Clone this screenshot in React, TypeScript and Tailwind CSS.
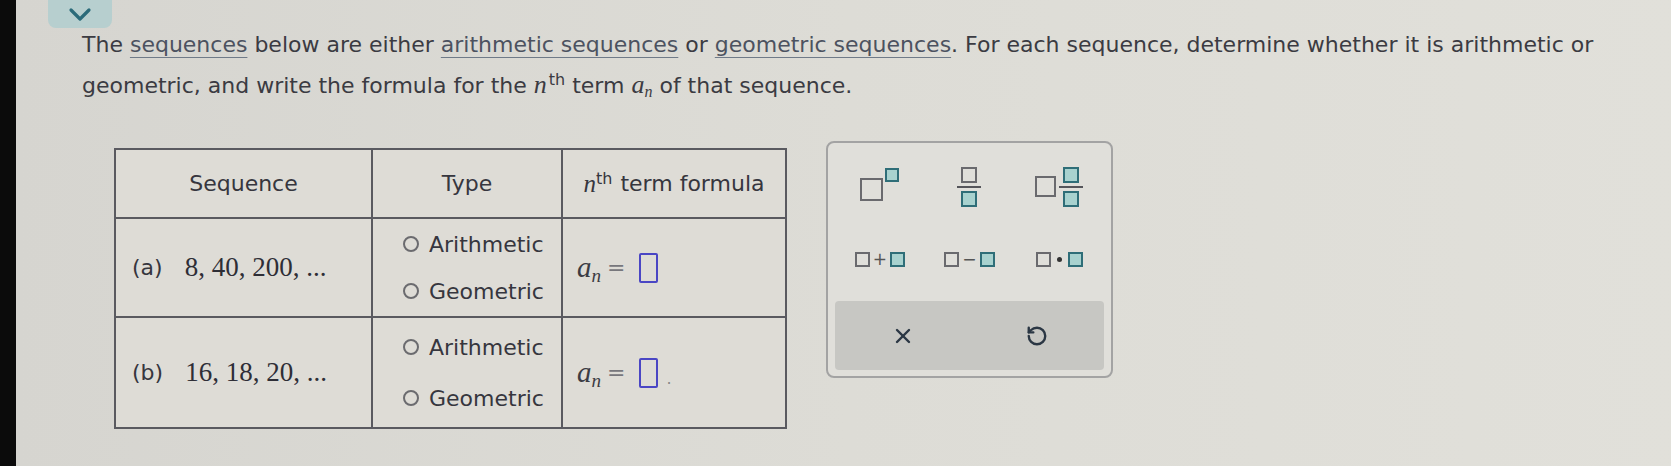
import { RotateCcw, X } from "lucide-react";

const sans = { fontFamily: '"DejaVu Sans", Verdana, sans-serif' };

function Sq({ teal = false, size = 12 }: { teal?: boolean; size?: number }) {
  return (
    <span
      className={`inline-block border-2 ${teal ? "border-[#2f6e78] bg-[#a8d2cf]" : "border-[#6a6a6e] bg-transparent"}`}
      style={{ width: size, height: size }}
    />
  );
}

function Radio({ label }: { label: string }) {
  return (
    <div className="flex items-center gap-[10px]">
      <span className="inline-block h-[16px] w-[16px] rounded-full border-2 border-[#6b6b6f]" />
      <span>{label}</span>
    </div>
  );
}

function AnBox({ dot = false }: { dot?: boolean }) {
  return (
    <div className="flex items-center pl-[14px]">
      <span className="font-['Liberation_Serif',serif] text-[29px] italic text-[#3c3c44]">
        a<sub className="text-[19px]">n</sub>
      </span>
      <span className="ml-[6px] text-[22px] text-[#77777c]">=</span>
      <span className="ml-[14px] inline-block h-[30px] w-[19px] rounded-[2px] border-2 border-[#4a46c4]" />
      {dot && <span className="ml-[8px] mt-[12px] text-[16px] text-[#888]">.</span>}
    </div>
  );
}

export default function App() {
  const row = (label: string, seq: string, h: string, gap: string, dot = false) => (
    <div className={`flex ${h} border-t-2 border-[#5a5a60]`}>
      <div className="flex w-[257px] items-center gap-[22px] border-r-2 border-[#5a5a60] pl-[16px]">
        <span>{label}</span>
        <span className="font-['Liberation_Serif',serif] text-[27px] text-[#2e2e36]">{seq}</span>
      </div>
      <div className={`flex w-[190px] flex-col justify-center ${gap} border-r-2 border-[#5a5a60] pl-[30px]`}>
        <Radio label="Arithmetic" />
        <Radio label="Geometric" />
      </div>
      <div className="flex w-[222px] items-center">
        <AnBox dot={dot} />
      </div>
    </div>
  );

  const link = "underline decoration-[#6f7a88] decoration-1 underline-offset-[5px] text-[#4c5260]";

  return (
    <div className="flex h-[466px] w-[1671px] overflow-hidden bg-black" style={sans}>
      <div className="w-[16px] shrink-0 bg-[#0b0b0b]" />
      <div className="flex flex-1 flex-col bg-gradient-to-r from-[#d6d5d0] via-[#dddcd6] to-[#e1e0da] text-[#3b3b42]">
        <div className="ml-[32px] flex h-[28px] w-[64px] items-center justify-center rounded-b-[8px] bg-[#b7cfcf]">
          <svg width="26" height="16" viewBox="0 0 26 16" fill="none">
            <path d="M4 4l9 9 9-9" stroke="#2b6b7a" strokeWidth="3.2" strokeLinecap="round" strokeLinejoin="round" />
          </svg>
        </div>

        <p className="ml-[66px] -mt-[3px] text-[22px] leading-[40px]">
          The <span className={link}>sequences</span> below are either{" "}
          <span className={link}>arithmetic sequences</span> or{" "}
          <span className={link}>geometric sequences</span>. For each sequence, determine whether it is arithmetic or
          <br />
          geometric, and write the formula for the{" "}
          <span className="font-['Liberation_Serif',serif] text-[26px] italic">n</span>
          <sup className="ml-[2px] text-[16px] leading-none">th</sup> term{" "}
          <span className="font-['Liberation_Serif',serif] text-[26px] italic">
            a<sub className="text-[16px] leading-none">n</sub>
          </span>{" "}
          of that sequence.
        </p>

        <div className="ml-[98px] mt-[35px] flex items-start gap-[39px]">
          <div className="mt-[7px] border-2 border-[#5a5a60] bg-[#dedcd6] text-[22px] text-[#36363e]">
            <div className="flex h-[67px] items-center">
              <div className="flex h-full w-[257px] items-center justify-center border-r-2 border-[#5a5a60]">Sequence</div>
              <div className="flex h-full w-[190px] items-center justify-center border-r-2 border-[#5a5a60]">Type</div>
              <div className="flex h-full w-[222px] items-center justify-center gap-[8px]">
                <span>
                  <span className="font-['Liberation_Serif',serif] text-[25px] italic">n</span>
                  <sup className="text-[16px]">th</sup>
                </span>
                <span>term formula</span>
              </div>
            </div>
            {row("(a)", "8, 40, 200, ...", "h-[99px]", "gap-[14px]")}
            {row("(b)", "16, 18, 20, ...", "h-[111px]", "gap-[18px]", true)}
          </div>

          <div className="flex h-[237px] w-[287px] flex-col rounded-[8px] border-2 border-[#a3a3a3] bg-[#e0dfda] px-[7px] pb-[6px] pt-[12px]">
            <div className="grid grid-cols-3 items-center justify-items-center pt-[10px]">
              <div className="flex items-start">
                <span className="mt-[13px]"><Sq size={23} /></span>
                <span className="ml-[2px]"><Sq teal size={14} /></span>
              </div>
              <div className="flex flex-col items-center">
                <Sq size={16} />
                <span className="my-[3px] h-[2px] w-[24px] bg-[#55555a]" />
                <Sq teal size={16} />
              </div>
              <div className="flex items-center">
                <Sq size={21} />
                <div className="ml-[3px] flex flex-col items-center">
                  <Sq teal size={16} />
                  <span className="my-[3px] h-[2px] w-[24px] bg-[#55555a]" />
                  <Sq teal size={16} />
                </div>
              </div>
            </div>
            <div className="mt-[39px] grid grid-cols-3 items-center justify-items-center">
              <div className="flex items-center gap-[3px] text-[17px] text-[#555]">
                <Sq size={15} />+<Sq teal size={15} />
              </div>
              <div className="flex items-center gap-[3px] text-[17px] text-[#555]">
                <Sq size={15} />−<Sq teal size={15} />
              </div>
              <div className="flex items-center gap-[6px] text-[17px] text-[#444]">
                <Sq size={15} />
                <span className="h-[5px] w-[5px] rounded-full bg-[#333]" />
                <Sq teal size={15} />
              </div>
            </div>
            <div className="mt-auto flex h-[69px] items-center justify-around rounded-[4px] bg-[#c7c7c3]">
              <X size={24} strokeWidth={2.4} color="#2b3744" />
              <RotateCcw size={22} strokeWidth={2.6} color="#2b3744" />
            </div>
          </div>
        </div>
      </div>
    </div>
  );
}
